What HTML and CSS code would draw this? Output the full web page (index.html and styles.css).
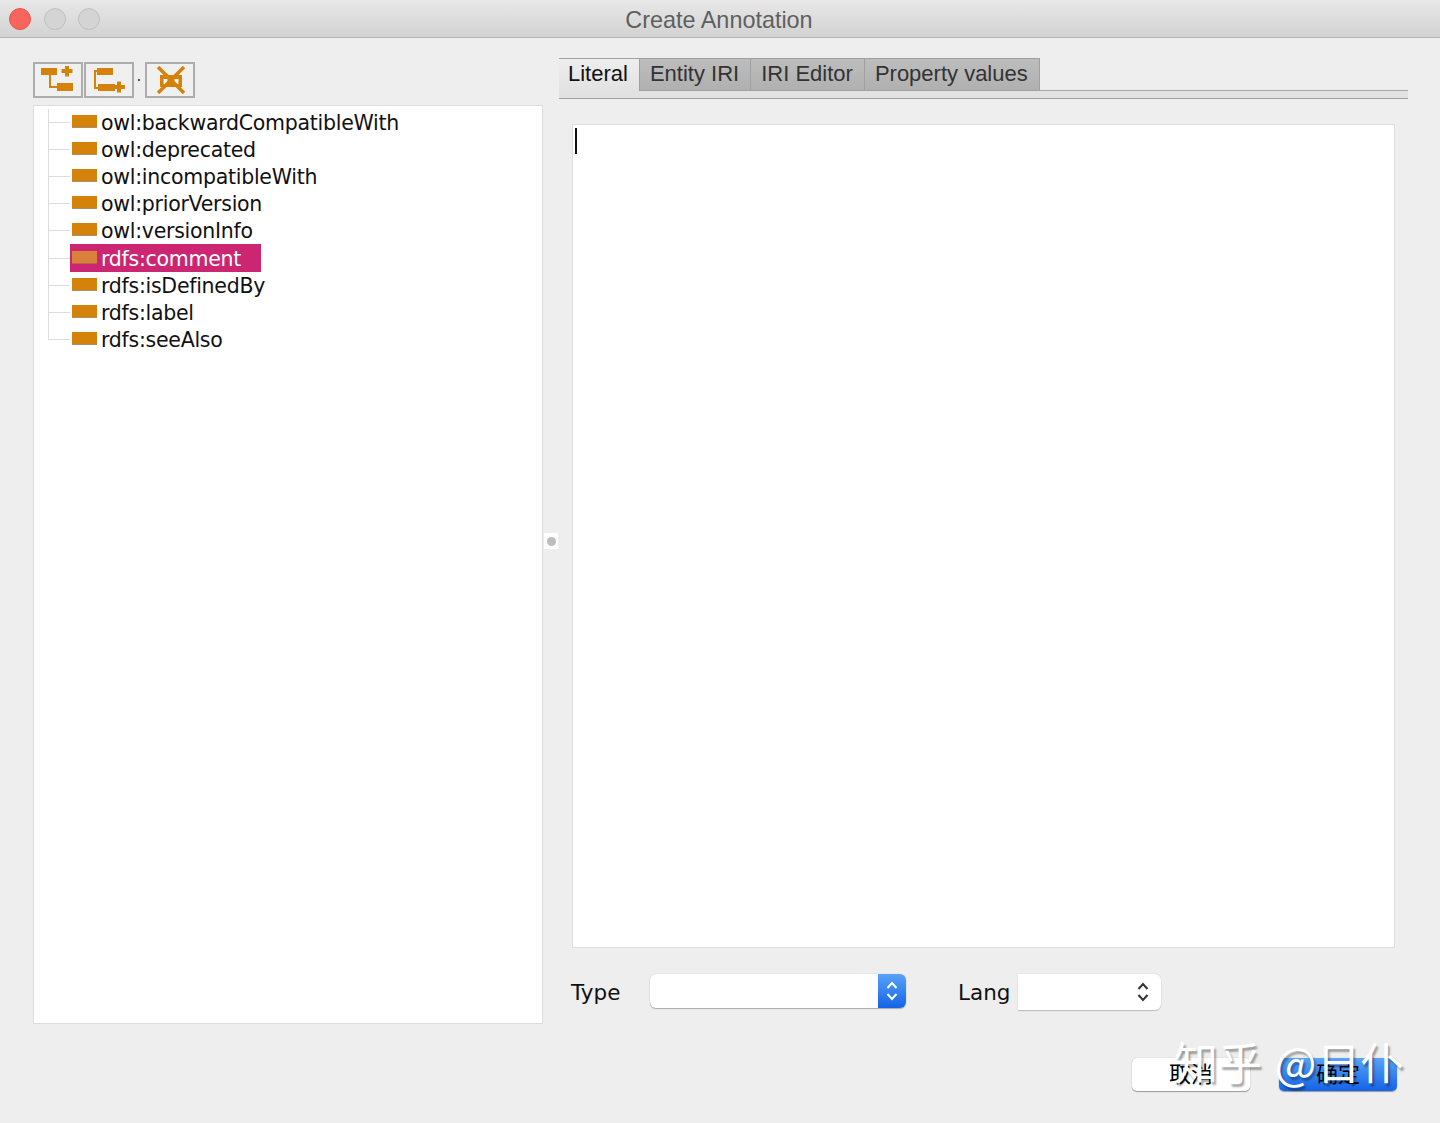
FILE: index.html
```html
<!DOCTYPE html>
<html lang="en">
<head>
  <meta charset="UTF-8">
  <title>Create Annotation</title>
  <link rel="stylesheet" href="styles.css">
</head>
<body>
  <div class="window">
    <div class="titlebar">
      <div class="lights">
        <span class="light light-close"></span>
        <span class="light"></span>
        <span class="light"></span>
      </div>
      <div class="title">Create Annotation</div>
    </div>

    <div class="main">
      <div class="left-col">
        <div class="toolbar">
          <button class="tool-btn">
            <svg width="34" height="28" viewBox="0 0 34 28"><path d="M0 2h16v7H0zM16 17h16v8H16z" fill="#d5820a"/><path d="M9 9v12h8" fill="none" stroke="#d5820a" stroke-width="2"/><path d="M20.500 5h11M26 0v10.500" stroke="#d5820a" stroke-width="4"/></svg>
          </button>
          <button class="tool-btn">
            <svg width="34" height="28" viewBox="0 0 34 28"><path d="M5 2h16v7H5zM6 18h17v7H6z" fill="#d5820a"/><path d="M6 5H3v17h3" fill="none" stroke="#d5820a" stroke-width="2"/><path d="M21 21h12M27 15.500v11" stroke="#d5820a" stroke-width="4"/></svg>
          </button>
          <span class="tool-dot"></span>
          <button class="tool-btn">
            <svg width="32" height="28" viewBox="0 0 32 28"><path d="M6 9h22v12H6z" fill="#d5820a"/><path d="M9.500 13h4v5h-4zM20.500 13h4v5h-4z" fill="#f4f4f4"/><path d="M4 1l26 26M30 1L4 27" stroke="#d5820a" stroke-width="3.500"/></svg>
          </button>
        </div>
        <div class="tree">
          <div class="tree-row"><span class="branch"></span><span class="node"><i class="prop-icon"></i>owl:backwardCompatibleWith</span></div>
          <div class="tree-row"><span class="branch"></span><span class="node"><i class="prop-icon"></i>owl:deprecated</span></div>
          <div class="tree-row"><span class="branch"></span><span class="node"><i class="prop-icon"></i>owl:incompatibleWith</span></div>
          <div class="tree-row"><span class="branch"></span><span class="node"><i class="prop-icon"></i>owl:priorVersion</span></div>
          <div class="tree-row"><span class="branch"></span><span class="node"><i class="prop-icon"></i>owl:versionInfo</span></div>
          <div class="tree-row"><span class="branch"></span><span class="node selected"><i class="prop-icon"></i>rdfs:comment</span></div>
          <div class="tree-row"><span class="branch"></span><span class="node"><i class="prop-icon"></i>rdfs:isDefinedBy</span></div>
          <div class="tree-row"><span class="branch"></span><span class="node"><i class="prop-icon"></i>rdfs:label</span></div>
          <div class="tree-row"><span class="branch"></span><span class="node"><i class="prop-icon"></i>rdfs:seeAlso</span></div>
        </div>
      </div>

      <div class="divider"><span class="handle"></span></div>

      <div class="right-col">
        <div class="tabs">
          <div class="tab active">Literal</div>
          <div class="tab">Entity IRI</div>
          <div class="tab">IRI Editor</div>
          <div class="tab">Property values</div>
        </div>
        <div class="tab-strip"></div>
        <div class="editor"><span class="caret"></span></div>
        <div class="type-row">
          <span class="field-label">Type</span>
          <div class="select-type">
            <span class="select-arrows">
              <svg width="14" height="24" viewBox="0 0 14 24"><path d="M2.500 9L7 4l4.500 5M2.500 15L7 20l4.500-5" fill="none" stroke="#fff" stroke-width="2"/></svg>
            </span>
          </div>
          <span class="field-label lang-label">Lang</span>
          <div class="select-lang">
            <svg width="14" height="24" viewBox="0 0 14 24"><path d="M2.500 9L7 4l4.500 5M2.500 15L7 20l4.500-5" fill="none" stroke="#333" stroke-width="2"/></svg>
          </div>
        </div>
      </div>
    </div>

    <div class="footer">
      <button class="btn">取消</button>
      <button class="btn btn-primary">确定</button>
    </div>

    <div class="watermark">知乎 @日仆</div>
  </div>
</body>
</html>
```

FILE: styles.css
```css
body {
  margin: 0;
  background: #eeeeee;
  font-family: "DejaVu Sans", sans-serif;
}

.window {
  position: relative;
  width: 1440px;
  height: 1123px;
  overflow: hidden;
}

.titlebar {
  position: relative;
  height: 37px;
  background: linear-gradient(#e8e8e8, #d2d2d2);
  border-bottom: 1px solid #b4b4b4;
  display: flex;
  align-items: center;
  justify-content: center;
}

.lights {
  position: absolute;
  top: 8px;
  left: 9px;
  display: flex;
  gap: 12.500px;
}

.light {
  width: 20px;
  height: 20px;
  border-radius: 50%;
  background: #d4d4d4;
  border: 1px solid #c0c0c0;
}

.light-close {
  background: #f9655c;
  border-color: #e2554c;
}

.title {
  font-family: "Liberation Sans", sans-serif;
  font-size: 23.400px;
  color: #5f5f5f;
  margin-left: -2px;
  padding-top: 3px;
}

.main {
  display: flex;
  padding: 20px 32px 0 33px;
}

.left-col {
  width: 510px;
  padding-top: 4px;
}

.toolbar {
  display: flex;
  height: 36px;
  margin-bottom: 7px;
}

.tool-btn {
  width: 50px;
  height: 36px;
  margin-right: 1px;
  padding: 0;
  background: #f0f0f0;
  border: 2px solid #adadad;
  display: flex;
  align-items: center;
  justify-content: center;
}

.tool-dot {
  width: 2px;
  height: 2px;
  margin: 17px 5px 0 3px;
  background: #555;
}

.tree {
  height: 914.500px;
  padding-top: 2.500px;
  background: #fff;
  border: 1px solid #dcdcdc;
}

.tree-row {
  height: 27.200px;
  display: flex;
  margin-left: 14px;
  font-size: 20.500px;
  letter-spacing: -0.270px;
  line-height: 25px;
  color: #111;
  white-space: nowrap;
}

.branch {
  width: 22px;
  background: linear-gradient(#dddddd, #dddddd) 0 0 / 1px 100% no-repeat,
              linear-gradient(#dddddd, #dddddd) 0 50% / 100% 1px no-repeat;
}

.tree-row:last-child .branch {
  background-size: 1px 50%, 100% 1px;
}

.node {
  display: flex;
  align-items: center;
  padding: 2px 0 0 2px;
}

.node.selected {
  width: 189px;
  background: #cc2673;
  color: #fff;
}

.prop-icon {
  width: 25px;
  height: 13px;
  margin: -4px 4px 0 0;
  background: #d5820a;
  border-bottom: 1px solid #a89070;
  box-sizing: border-box;
}

.selected .prop-icon {
  background: #d9803a;
  border-color: #c0604a;
}

.divider {
  width: 16px;
  display: flex;
  align-items: center;
  justify-content: center;
}

.handle {
  width: 14px;
  height: 16px;
  background: #fff;
  display: flex;
  align-items: center;
  justify-content: center;
}

.handle::after {
  content: "";
  width: 9px;
  height: 9px;
  border-radius: 50%;
  background: #bdbdbd;
}

.right-col {
  width: 849px;
}

.tabs {
  height: 32px;
  display: flex;
  border-bottom: 1px solid #a9a9a9;
  font-family: "Liberation Sans", sans-serif;
  font-size: 22px;
}

.tab {
  height: 31px;
  padding: 0 11px 0 10px;
  line-height: 30px;
  background: linear-gradient(#bdbdbd, #b0b0b0);
  border: 1px solid #a0a0a0;
  border-left: 0;
  color: #333;
}

.tab.active {
  height: 32px;
  padding: 0 11px 0 9px;
  background: linear-gradient(#eeeeee, #e2e2e2);
  color: #111;
  border-bottom: 0;
  position: relative;
}

.tab-strip {
  height: 7px;
  background: #e2e2e2;
  border-bottom: 1px solid #a2a2a2;
}

.editor {
  height: 824px;
  margin: 25px 13px 0;
  background: #fff;
  border: 1px solid #dedede;
  box-sizing: border-box;
  padding: 3px 2px;
}

.caret {
  display: block;
  width: 2px;
  height: 26px;
  background: #111;
}

.type-row {
  display: flex;
  align-items: center;
  height: 37px;
  margin: 25px 0 0 12px;
  font-size: 21.500px;
  color: #111;
}

.field-label {
  width: 79px;
  padding-top: 1px;
}

.lang-label {
  width: 60px;
  margin-left: 52px;
}

.select-type {
  width: 256px;
  height: 34px;
  margin-bottom: 2px;
  background: #fff;
  border-radius: 6px;
  box-shadow: 0 1px 1px #aaa, 0 0 1px #bbb;
  display: flex;
  justify-content: flex-end;
  overflow: hidden;
}

.select-arrows {
  width: 28px;
  background: linear-gradient(#5aa3f8, #1463e6);
  display: flex;
  align-items: center;
  justify-content: center;
}

.select-lang {
  width: 143px;
  height: 36px;
  background: #fff;
  border-radius: 0 6px 6px 0;
  box-shadow: 0 1px 1px #bbb, 0 0 1px #bbb;
  display: flex;
  align-items: center;
  justify-content: flex-end;
  padding-right: 11px;
  box-sizing: border-box;
}

.footer {
  display: flex;
  justify-content: flex-end;
  gap: 29px;
  margin-top: 34px;
  padding-right: 43px;
}

.btn {
  width: 118px;
  height: 33px;
  padding: 0;
  background: #fff;
  border: 0;
  border-radius: 5px;
  box-shadow: 0 1px 1px #999, 0 0 1px #aaa;
  font-family: "Liberation Sans", "Noto Sans CJK SC", sans-serif;
  font-size: 22px;
  line-height: 27px;
  color: #000;
}

.btn-primary {
  background: linear-gradient(#5aa3f8, #1463e6);
}

.watermark {
  position: absolute;
  top: 1030px;
  left: 1174px;
  font-family: "Noto Sans CJK SC", sans-serif;
  font-size: 44px;
  word-spacing: 3px;
  line-height: 62px;
  color: #fff;
  white-space: nowrap;
  text-shadow: 2px 3px 2px rgba(0, 0, 0, 0.35);
}
```
